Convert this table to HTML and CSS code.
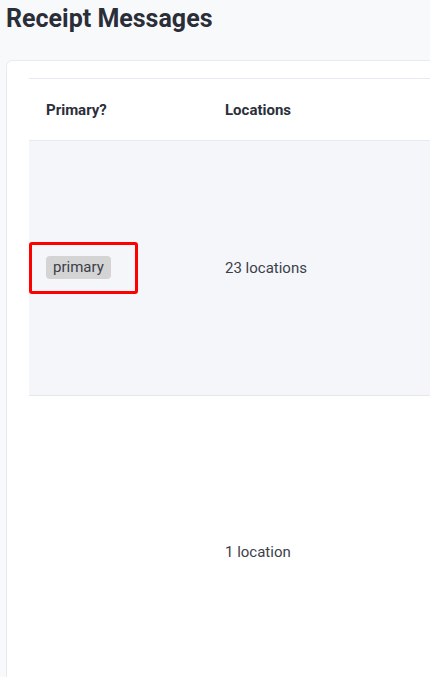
FILE: index.html
```html
<!DOCTYPE html>
<html lang="en">
<head>
<meta charset="utf-8">
<title>Receipt Messages</title>
<link rel="stylesheet" href="styles.css">
</head>
<body>
<main class="page">
  <h1 class="title">Receipt Messages</h1>
  <section class="card">
    <table class="table">
      <thead>
        <tr class="head-row">
          <th class="col-primary">Primary?</th>
          <th class="col-locations">Locations</th>
        </tr>
      </thead>
      <tbody>
        <tr class="row row-alt">
          <td class="col-primary">
            <span class="highlight"><span class="badge">primary</span></span>
          </td>
          <td class="col-locations">23 locations</td>
        </tr>
        <tr class="row row-tall">
          <td class="col-primary"></td>
          <td class="col-locations">1 location</td>
        </tr>
      </tbody>
    </table>
  </section>
</main>
</body>
</html>
```

FILE: styles.css
```css
html, body {
  margin: 0;
  padding: 0;
  overflow: hidden;
  background: #f8f9fb;
}

body {
  font-family: Roboto, "Liberation Sans", sans-serif;
  color: #2c2f3a;
}

.page {
  padding: 0 0 0 6px;
  width: 560px;
}

.title {
  margin: 0;
  padding-top: 3px;
  height: 57px;
  font-size: 25px;
  line-height: 32px;
  font-weight: 700;
  color: #2a2e39;
}

.card {
  background: #ffffff;
  border: 1px solid #e6eaf2;
  border-radius: 6px;
  padding: 17px 0 0 22px;
  height: 700px;
}

.table {
  border-collapse: collapse;
  width: 100%;
}

.table th,
.table td {
  padding: 0 17px;
  text-align: left;
  vertical-align: middle;
}

.head-row {
  border-top: 1px solid #e6e9f1;
  border-bottom: 1px solid #e6e9f1;
  height: 62px;
}

.head-row th {
  font-size: 15px;
  font-weight: 700;
  color: #2c2f3a;
}

.col-primary {
  width: 145px;
}

.row td {
  font-size: 15px;
  color: #3b3f4a;
}

.row-alt {
  background: #f5f6fa;
  border-bottom: 1px solid #e4e7ef;
  height: 255px;
}

.row-tall {
  height: 312px;
}

.table td.col-primary {
  padding-left: 0;
}

.highlight {
  display: inline-flex;
  align-items: center;
  border: 3px solid #ff0000;
  border-radius: 3px;
  padding: 11px 24px 12px 14px;
}

.badge {
  display: inline-block;
  background: #d4d4d4;
  color: #3a3e49;
  border-radius: 4px;
  font-size: 15px;
  line-height: 23px;
  padding: 0 7px;
}
```
